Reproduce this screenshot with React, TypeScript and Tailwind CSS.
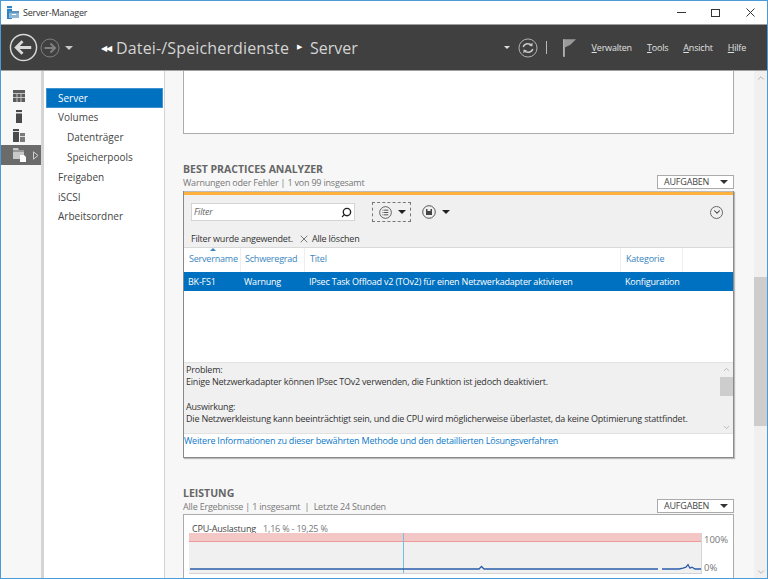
import { ChevronDown, ChevronUp, Search, X } from "lucide-react";

const font = { fontFamily: '"Open Sans", "Noto Sans", sans-serif' };

const hours = ["14", "15", "16", "17", "18", "19", "20", "21", "22", "23", "00", "01", "02", "03", "04", "05", "06", "07", "08", "09", "10", "11", "12", "13"];

const Caret = ({ className = "" }: { className?: string }) => (
  <span className={`inline-block h-0 w-0 border-x-[4px] border-t-[4px] border-x-transparent ${className}`} />
);

const NavIcons = () => (
  <div className="flex w-10 shrink-0 flex-col">
    <div className="flex h-[20px] items-center pl-[12px]">
      <svg width="12" height="12" viewBox="0 0 12 12">
        <rect width="12" height="12" fill="#5c5c5c" />
        <path d="M0 3.500h12M0 7.500h12M4 3.500V12M8 3.500V12" stroke="#c4c4c4" strokeWidth="1" />
      </svg>
    </div>
    <div className="flex h-[20px] items-center pl-[15px]">
      <svg width="6" height="13" viewBox="0 0 6 13">
        <rect width="6" height="13" fill="#4a4a4a" />
        <rect y="2" width="6" height="1.500" fill="#e8e8e8" />
      </svg>
    </div>
    <div className="flex h-[19px] items-center pl-[12px]">
      <svg width="12" height="13" viewBox="0 0 12 13">
        <rect width="6" height="13" fill="#4a4a4a" />
        <rect x="7" y="4" width="5" height="9" fill="#7a7a7a" />
        <rect y="2" width="6" height="1" fill="#ddd" />
        <rect x="7" y="7" width="5" height="1" fill="#ddd" />
      </svg>
    </div>
    <div className="flex h-[20px] items-center bg-[#6b6b6b] pl-[12px]">
      <svg width="13" height="14" viewBox="0 0 13 14">
        <path d="M0 0h5l1 2h5v9H0z" fill="#c9c9c9" />
        <path d="M0 3h11" stroke="#6b6b6b" />
        <path d="M7 7h4l2 2v5H7z" fill="#fff" />
      </svg>
      <svg className="ml-[7px]" width="6" height="9" viewBox="0 0 6 9">
        <path d="M.5.8 5 4.500.5 8.200z" fill="none" stroke="#cfcfcf" />
      </svg>
    </div>
  </div>
);

const Aufgaben = () => (
  <div className="mb-[1px] flex h-[14px] w-[77px] items-center justify-between border border-[#ababab] bg-white pl-[6px] pr-[5px] text-[9px] text-[#444]">
    AUFGABEN
    <Caret className="border-t-[#333]" />
  </div>
);

export default function App() {
  return (
    <div
      className="flex h-[579px] w-[768px] flex-col overflow-hidden border border-[#4a9bd8] bg-white tracking-[-0.2px] text-[#333]"
      style={font}
    >
      {/* Title bar */}
      <div className="flex h-[23px] shrink-0 items-center bg-white pl-[6px]">
        <svg width="12" height="13" viewBox="0 0 12 13">
          <rect width="5" height="13" fill="#2f83c8" />
          <rect x="0" y="2" width="5" height="1" fill="#cfe4f5" />
          <rect x="2" y="5" width="10" height="7" fill="#8eb7d4" />
          <rect x="2" y="5" width="10" height="2" fill="#5c94bd" />
          <rect x="5" y="8" width="4" height="1" fill="#fff" />
        </svg>
        <span className="ml-[4px] text-[9px] text-[#333]">Server-Manager</span>
        <div className="ml-auto flex items-center pr-[12px]">
          <span className="h-px w-[9px] bg-[#333]" />
          <span className="ml-[25px] h-[8px] w-[9px] border border-[#333]" />
          <svg className="ml-[26px]" width="9" height="9" viewBox="0 0 9 9">
            <path d="m.5.5 8 8M8.500.5l-8 8" stroke="#333" strokeWidth="1" />
          </svg>
        </div>
      </div>

      {/* Header */}
      <div className="flex h-[47px] shrink-0 items-center border-y border-[#a0a0a0] bg-[#404040] pl-[8px] pr-[21px] text-[#d8d8d8]">
        <svg width="29" height="29" viewBox="0 0 30 30">
          <circle cx="15" cy="15" r="13.500" fill="none" stroke="#d8d8d8" strokeWidth="1.500" />
          <path d="M23 15H8M14 8.500 7.500 15l6.500 6.500" fill="none" stroke="#d8d8d8" strokeWidth="3" />
        </svg>
        <svg className="ml-[2px]" width="20" height="20" viewBox="0 0 20 20">
          <circle cx="10" cy="10" r="9" fill="none" stroke="#808080" />
          <path d="M4.500 10H15M10.500 5.500 15 10l-4.500 4.500" fill="none" stroke="#808080" strokeWidth="2" />
        </svg>
        <Caret className="ml-[5px] border-t-[#c8c8c8]" />
        <span className="ml-[28px] text-[8px] tracking-[-1.500px] text-white">◀◀</span>
        <span className="ml-[6px] text-[16px] tracking-[0.15px] text-[#d4d4d4]">Datei-/Speicherdienste</span>
        <span className="ml-[8px] text-[7px] text-white">▶</span>
        <span className="ml-[8px] text-[16px] tracking-normal text-[#d4d4d4]">Server</span>
        <span className="ml-auto h-0 w-0 border-x-[3px] border-t-[3px] border-x-transparent border-t-[#e0e0e0]" />
        <svg className="ml-[8px]" width="20" height="20" viewBox="0 0 21 21">
          <circle cx="10.500" cy="10.500" r="9.500" fill="none" stroke="#b8b8b8" />
          <path d="M5.500 9.500a5 4.500 0 0 1 9-1.500M15.500 11.500a5 4.500 0 0 1-9 1.500" fill="none" stroke="#c8c8c8" strokeWidth="1.500" />
          <path d="m15.500 5-.5 4-3.500-1zM5.500 16l.5-4 3.500 1z" fill="#c8c8c8" />
        </svg>
        <span className="ml-[8px] h-[13px] w-px bg-[#b8b8b8]" />
        <svg className="ml-[16px]" width="13" height="18" viewBox="0 0 14 19">
          <rect width="2" height="19" fill="#b0b0b0" />
          <path d="M2 0h12L8 6l-6 3z" fill="#9a9a9a" />
        </svg>
        <div className="ml-[16px] flex gap-[15px] text-[9px] text-[#e0e0e0]">
          <span><u>V</u>erwalten</span>
          <span><u>T</u>ools</span>
          <span><u>A</u>nsicht</span>
          <span><u>H</u>ilfe</span>
        </div>
      </div>

      {/* Body */}
      <div className="flex min-h-0 flex-1 bg-[#f7f7f7]">
        <div className="flex w-10 shrink-0 flex-col pt-[15px]">
          <NavIcons />
        </div>
        <div className="w-[3px] shrink-0 bg-[#d4d4d4]" />

        <div className="w-[121px] shrink-0 border-r border-[#d4d4d4] bg-white pl-[2px] pr-[1px] pt-[17px] text-[10px] tracking-normal text-[#444]">
          <div className="flex h-[20px] items-center border border-[#3f94d0] bg-[#0070c0] pl-[11px] text-white">Server</div>
          <div className="flex h-[19.800px] items-center pl-[12px]">Volumes</div>
          <div className="flex h-[19.800px] items-center pl-[21px]">Datenträger</div>
          <div className="flex h-[19.800px] items-center pl-[21px]">Speicherpools</div>
          <div className="flex h-[19.800px] items-center pl-[12px]">Freigaben</div>
          <div className="flex h-[19.800px] items-center pl-[12px]">iSCSI</div>
          <div className="flex h-[19.800px] items-center pl-[12px]">Arbeitsordner</div>
        </div>

        {/* Content */}
        <div className="min-w-0 flex-1 overflow-hidden pl-[18px] pr-[20px]">
          <div className="h-[63px] border-x border-b border-[#ababab] bg-white" />

          <div className="mt-[29px] flex h-[27px] items-end justify-between">
            <div>
              <div className="text-[10.500px] font-bold leading-[13px] tracking-normal text-[#666]">BEST PRACTICES ANALYZER</div>
              <div className="text-[9px] leading-[14px] text-[#777]">Warnungen oder Fehler | 1 von 99 insgesamt</div>
            </div>
            <Aufgaben />
          </div>

          <div className="mt-[1px] h-[267px] border border-t-0 border-[#8a8a8a] bg-white shadow-[1px_1px_1px_#bbb]">
            <div className="h-[4px] border-t border-[#bbb] bg-[#ffb13d]" />
            <div className="flex h-[53px] flex-col border-b border-[#d9d9d9] bg-[#f0f0f0] text-[9px] text-[#333]">
              <div className="flex h-[34px] shrink-0 items-center pl-[7px] pr-[10px]">
                <div className="flex h-[18px] w-[164px] items-center justify-between border border-[#d4d4d4] bg-white pl-[2px] pr-[2px] italic text-[#666]">
                  Filter
                  <Search size={11} strokeWidth={3} className="-scale-x-100 text-[#222]" />
                </div>
                <div className="ml-[17px] flex h-[20px] w-[39px] items-center border border-dashed border-[#777] pl-[6px]">
                  <svg width="13" height="13" viewBox="0 0 14 14">
                    <circle cx="7" cy="7" r="6.300" fill="none" stroke="#555" />
                    <path d="M5.500 4.500h4.500M5.500 7h4.500M5.500 9.500h4.500M3.800 4.500h1M3.800 7h1M3.800 9.500h1" stroke="#444" />
                  </svg>
                  <Caret className="ml-[6px] border-t-[#222]" />
                </div>
                <svg className="ml-[11px]" width="14" height="14" viewBox="0 0 14 14">
                  <circle cx="7" cy="7" r="6.300" fill="none" stroke="#555" />
                  <path d="M4 4h6v6H4z" fill="#444" />
                  <path d="M5.500 4h3v2h-3z" fill="#eee" />
                </svg>
                <Caret className="ml-[6px] border-t-[#222]" />
                <div className="ml-auto flex h-[13px] w-[13px] items-center justify-center rounded-full border border-[#666]">
                  <ChevronDown size={10} strokeWidth={2.500} />
                </div>
              </div>
              <div className="flex h-[18px] items-center pl-[7px] pt-[1px]">
                Filter wurde angewendet.
                <X size={12} strokeWidth={2} className="ml-[5px] text-[#777]" />
                <span className="ml-[2px]">Alle löschen</span>
              </div>
            </div>

            <div className="relative flex h-[24px] items-center text-[9px] text-[#3a86c0]">
              <span className="absolute left-[26px] top-0 h-0 w-0 border-x-[3px] border-b-[3px] border-x-transparent border-b-[#3a86c0]" />
              <div className="flex h-full w-[57px] items-center border-r border-[#eeeeee] pb-[2px] pl-[5px]">Servername</div>
              <div className="flex h-full w-[64px] items-center border-r border-[#eeeeee] pb-[2px] pl-[4px]">Schweregrad</div>
              <div className="flex h-full w-[316px] items-center border-r border-[#eeeeee] pb-[2px] pl-[5px]">Titel</div>
              <div className="flex h-full w-[62px] items-center border-r border-[#eeeeee] pb-[2px] pl-[5px]">Kategorie</div>
            </div>

            <div className="flex h-[19px] items-center bg-[#0070c0] text-[9px] text-white">
              <div className="w-[57px] pl-[4px]">BK-FS1</div>
              <div className="w-[64px] pl-[3px]">Warnung</div>
              <div className="w-[316px] pl-[4px]">IPsec Task Offload v2 (TOv2) für einen Netzwerkadapter aktivieren</div>
              <div className="pl-[4px]">Konfiguration</div>
            </div>

            <div className="h-[71px]" />

            <div className="flex h-[72px] border-y border-[#e2e2e2] bg-[#f0f0f0] text-[9px] leading-[12.200px] text-[#333]">
              <div className="min-w-0 flex-1 pl-[2px] pt-[1px]">
                <div>Problem:</div>
                <div>Einige Netzwerkadapter können IPsec TOv2 verwenden, die Funktion ist jedoch deaktiviert.</div>
                <div className="h-[12.200px]" />
                <div>Auswirkung:</div>
                <div>Die Netzwerkleistung kann beeinträchtigt sein, und die CPU wird möglicherweise überlastet, da keine Optimierung stattfindet.</div>
              </div>
              <div className="flex w-[13px] shrink-0 flex-col items-center pb-[1px] pt-[2px] text-[#aaa]">
                <ChevronUp size={9} />
                <div className="mt-[3px] h-[19px] w-full bg-[#cdcdcd]" />
                <ChevronDown size={9} className="mt-auto" />
              </div>
            </div>

            <div className="h-[23px] text-[9px] leading-[14px] text-[#0a78c8]">
              Weitere Informationen zu dieser bewährten Methode und den detaillierten Lösungsverfahren
            </div>
          </div>

          <div className="mt-[30px] flex h-[26px] items-end justify-between">
            <div>
              <div className="text-[10.500px] font-bold leading-[13px] tracking-normal text-[#666]">LEISTUNG</div>
              <div className="text-[9px] leading-[14px] text-[#777]">Alle Ergebnisse | 1 insgesamt&nbsp; | &nbsp;Letzte 24 Stunden</div>
            </div>
            <Aufgaben />
          </div>

          <div className="border border-[#ababab] bg-white pl-[5px] pt-[8px]">
            <div className="h-[10px] pl-[3px] text-[9px] leading-[12px] text-[#444]">
              CPU-Auslastung <span className="ml-[5px] text-[#777]">1,16 % - 19,25 %</span>
            </div>
            <div className="flex">
              <div className="relative h-[41px] w-[513px] border-b border-r border-[#d4d4d4] bg-[#f0f0f0]">
                <div className="h-[9px] border-b border-[#ef9a9a] bg-[#f4c7c7]" />
                <div className="absolute bottom-0 left-[214px] top-0 w-px bg-[#6fc3e0]" />
                <svg className="absolute bottom-[1px] left-0" width="512" height="10" viewBox="0 0 512 10">
                  <path
                    d="M1 7H290l2.500-2.500 2.500 2.500H469M473 7H490l4-.8 3-1 2-2.500 2 3.500 2-1 3 1.800h6"
                    fill="none"
                    stroke="#2a5caa"
                    strokeWidth="1.300"
                  />
                </svg>
              </div>
              <div className="flex flex-col justify-between pl-[2px] pt-[1px] text-[9.500px] leading-[12px] tracking-normal text-[#777]">
                <span>100%</span>
                <span>0%</span>
              </div>
            </div>
            <div className="mt-[2px] flex w-[513px] text-[9px] leading-[12px] text-[#777]">
              {hours.map((h) => (
                <span key={h} className="w-[21.300px] shrink-0 text-center">{h}</span>
              ))}
            </div>
          </div>
        </div>

        {/* Scrollbar */}
        <div className="flex w-[13px] shrink-0 flex-col items-center bg-[#f0f0f0] pb-[1px] pt-[2px] text-[#aaa]">
          <ChevronUp size={10} />
          <div className="mt-[194px] h-[149px] w-full bg-[#cdcdcd]" />
          <ChevronDown size={10} className="mt-auto" />
        </div>
      </div>
    </div>
  );
}
